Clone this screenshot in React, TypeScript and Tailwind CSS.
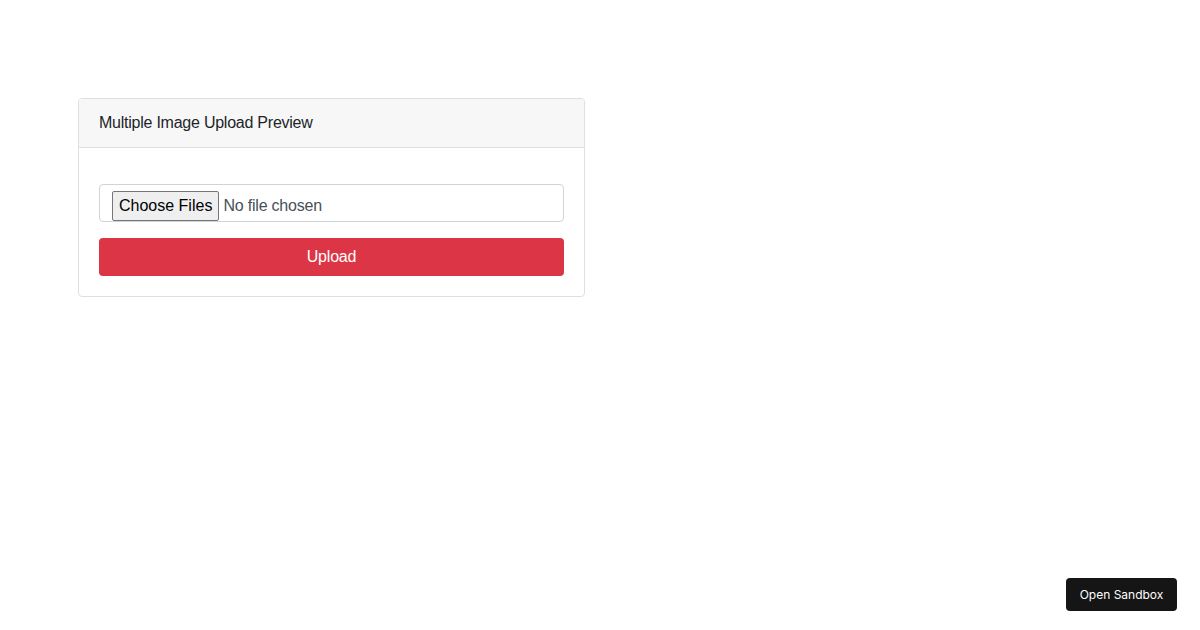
import React from "react";

const FONT = '"Liberation Sans", Arial, sans-serif';

export default function App() {
  return (
    <div className="min-h-[630px] w-[1200px] bg-white" style={{ fontFamily: FONT }}>
      <div className="pl-[78px] pt-[98px]">
        <div className="w-[507px] rounded-[4px] border border-[#dfdfdf] bg-white">
          <div className="rounded-t-[3px] border-b border-[#dfdfdf] bg-[#f7f7f7] px-5 py-3 text-base leading-6 tracking-[-0.24px] text-[#212529]">
            Multiple Image Upload Preview
          </div>
          <div className="px-5 pb-5 pt-[36px]">
            <input
              type="file"
              multiple
              className="block h-[38px] w-full rounded-[4px] border border-[#ced4da] px-3 py-[6px] text-base leading-6 tracking-[-0.2px] text-[#495057] file:mr-[4px] file:h-[30px] file:rounded-[2px] file:border file:border-[#767676] file:bg-[#efefef] file:px-[6px] file:text-base file:tracking-normal file:text-black"
              style={{ fontFamily: FONT }}
            />
            <button
              className="mt-4 block h-[38px] w-full rounded-[4px] bg-[#dc3545] text-base leading-6 tracking-[-0.2px] text-white"
              style={{ fontFamily: FONT }}
            >
              Upload
            </button>
          </div>
        </div>
      </div>
      <button
        className="fixed bottom-[19px] right-[23px] flex h-[33px] w-[111px] items-center justify-center rounded-[4px] bg-[#151515] text-[12px] text-white"
        style={{ fontFamily: 'Inter, "Liberation Sans", sans-serif' }}
      >
        Open Sandbox
      </button>
    </div>
  );
}
